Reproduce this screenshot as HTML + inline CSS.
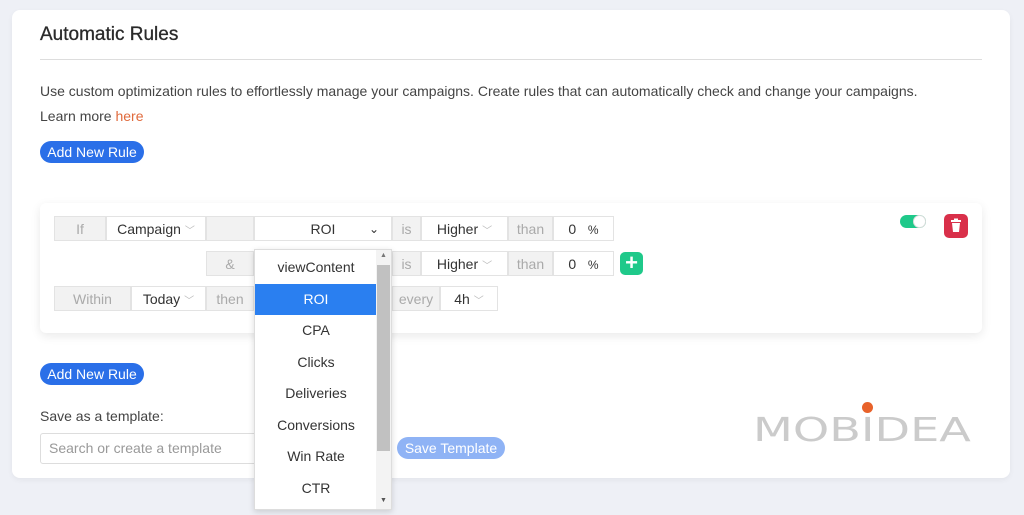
<!DOCTYPE html>
<html><head><style>
*{box-sizing:border-box;margin:0;padding:0}
body{width:1024px;height:515px;background:#eef0f6;font-family:"Liberation Sans",sans-serif;color:#333;position:relative;overflow:hidden}
.abs{position:absolute}
.card{left:12px;top:10px;width:998px;height:468px;background:#fff;border-radius:8px;box-shadow:0 2px 6px rgba(0,0,0,.05)}
.btn{background:#2a6fe8;color:#fff;border-radius:11px;font-size:14px;text-align:center;line-height:22px;height:22px}
.cell{position:absolute;height:25px;line-height:25px;font-size:14px;text-align:center;border:1px solid #e3e3e3}
.g{background:#f2f2f2;color:#aaa}
.w{background:#fff;color:#333}
.chev{color:#bbb;font-size:10px;margin-left:4px}
.dd div{height:31.5px;line-height:31.5px;text-align:center;font-size:14px;color:#333;width:122px}
</style></head><body>
<div class="abs card"></div>
<div class="abs" style="left:40px;top:24px;font-size:19px;color:#2a2a2a;-webkit-text-stroke:0.3px #2a2a2a">Automatic Rules</div>
<div class="abs" style="left:40px;top:59px;width:942px;height:1px;background:#ddd"></div>
<div class="abs" style="left:40px;top:83px;font-size:14px;color:#444">Use custom optimization rules to effortlessly manage your campaigns. Create rules that can automatically check and change your campaigns.</div>
<div class="abs" style="left:40px;top:108px;font-size:14px;color:#444">Learn more <span style="color:#e06a3c">here</span></div>
<div class="abs btn" style="left:40px;top:141px;width:104px">Add New Rule</div>

<div class="abs" style="left:40px;top:203px;width:942px;height:130px;background:#fff;border-radius:6px;box-shadow:0 3px 10px rgba(0,0,0,.09)"></div>
<!-- row1 -->
<div class="cell g" style="left:54px;top:216px;width:52px">If</div>
<div class="cell w" style="left:106px;top:216px;width:100px">Campaign<span class="chev">﹀</span></div>
<div class="cell g" style="left:206px;top:216px;width:48px"></div>
<div class="cell w" style="left:254px;top:216px;width:138px">ROI<span style="position:absolute;right:12px;font-size:12px">⌄</span></div>
<div class="cell g" style="left:392px;top:216px;width:29px">is</div>
<div class="cell w" style="left:421px;top:216px;width:87px">Higher<span class="chev">﹀</span></div>
<div class="cell g" style="left:508px;top:216px;width:45px">than</div>
<div class="cell w" style="left:553px;top:216px;width:61px">0 &nbsp;&nbsp;<span style="font-size:12px">%</span></div>
<!-- row2 -->
<div class="cell g" style="left:206px;top:251px;width:48px">&amp;</div>
<div class="cell g" style="left:392px;top:251px;width:29px">is</div>
<div class="cell w" style="left:421px;top:251px;width:87px">Higher<span class="chev">﹀</span></div>
<div class="cell g" style="left:508px;top:251px;width:45px">than</div>
<div class="cell w" style="left:553px;top:251px;width:61px">0 &nbsp;&nbsp;<span style="font-size:12px">%</span></div>
<div class="abs" style="left:620px;top:252px;width:23px;height:23px;background:#1fc98a;border-radius:5px;color:#fff;font-size:22px;line-height:22px;text-align:center;font-weight:bold">+</div>
<!-- row3 -->
<div class="cell g" style="left:54px;top:286px;width:77px">Within</div>
<div class="cell w" style="left:131px;top:286px;width:75px">Today<span class="chev">﹀</span></div>
<div class="cell g" style="left:206px;top:286px;width:48px">then</div>
<div class="cell g" style="left:392px;top:286px;width:48px">every</div>
<div class="cell w" style="left:440px;top:286px;width:58px">4h<span class="chev">﹀</span></div>
<!-- toggle & trash -->
<div class="abs" style="left:900px;top:215px;width:26px;height:13px;background:#1fc98a;border-radius:7px"></div>
<div class="abs" style="left:913px;top:215px;width:13px;height:13px;background:#fff;border-radius:50%;border:1px solid #ddd"></div>
<div class="abs" style="left:944px;top:214px;width:24px;height:24px;background:#d9304a;border-radius:5px"></div>
<svg class="abs" style="left:944px;top:214px" width="24" height="24"><rect x="7" y="6" width="10" height="2" fill="#fff"/><rect x="10" y="4.5" width="4" height="2" fill="#fff"/><path d="M8 9h8l-1 9h-6z" fill="#fff"/></svg>

<div class="abs btn" style="left:40px;top:363px;width:104px">Add New Rule</div>
<div class="abs" style="left:40px;top:408px;font-size:14px;color:#444">Save as a template:</div>
<div class="abs" style="left:40px;top:433px;width:230px;height:31px;border:1px solid #ddd;border-radius:3px;font-size:14px;color:#999;line-height:29px;padding-left:8px">Search or create a template</div>
<div class="abs btn" style="left:397px;top:437px;width:108px;background:#8fb3f5">Save Template</div>

<!-- logo -->
<div class="abs" style="left:862px;top:402px;width:11px;height:11px;border-radius:50%;background:#e8622a"></div>
<div class="abs" style="left:753px;top:410px;font-size:33px;line-height:40px;letter-spacing:0px;color:#cbcbcb;font-family:'DejaVu Sans',sans-serif;transform:scaleX(1.4);transform-origin:left">MOBIDEA</div>

<!-- dropdown -->
<div class="abs dd" style="left:254px;top:249px;width:138px;height:261px;background:#fff;border:1px solid #ddd;box-shadow:0 2px 6px rgba(0,0,0,.15);padding-top:2px">
<div>viewContent</div>
<div style="background:#2a7ff0;color:#fff">ROI</div>
<div>CPA</div><div>Clicks</div><div>Deliveries</div><div>Conversions</div><div>Win Rate</div><div>CTR</div>
</div>
<div class="abs" style="left:376px;top:250px;width:15px;height:259px;background:#f3f3f3"></div>
<div class="abs" style="left:377px;top:265px;width:13px;height:186px;background:#c1c1c1"></div>
<div class="abs" style="left:380px;top:252px;font-size:7px;color:#777">▲</div>
<div class="abs" style="left:380px;top:497px;font-size:7px;color:#555">▼</div>
</body></html>
